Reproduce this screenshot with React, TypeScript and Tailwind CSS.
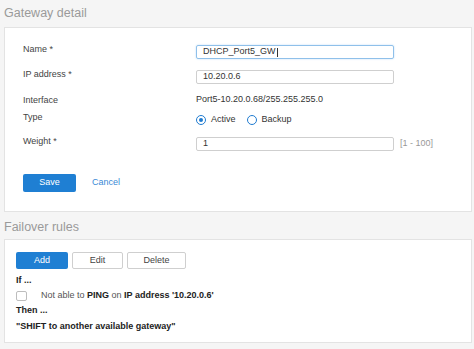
import React from "react";

const font = { fontFamily: '"Liberation Sans", Arial, sans-serif' };

function Label({ children }: { children: React.ReactNode }) {
  return <div className="w-[173px] shrink-0 text-[9px] leading-[9px] text-[#444]">{children}</div>;
}

export default function App() {
  return (
    <div className="w-[474px] h-[349px] overflow-hidden bg-[#f5f5f5] flex flex-col" style={font}>
      <div className="h-[27px] shrink-0 flex items-center pl-[4px] text-[12.5px] text-[#9a9a9a]">Gateway detail</div>
      <div className="ml-[4px] mr-[2px] h-[185px] shrink-0 bg-white border border-[#e3e3e3] pl-[18px] pt-[17px] flex flex-col">
        <div className="flex items-start h-[14px]">
          <Label>Name *</Label>
          <div className="w-[198px] h-[14px] border border-[#8fc0ea] rounded-[2px] shadow-[0_0_2px_#b9daf5] flex items-center pl-[6px] text-[9px] text-[#333]">
            DHCP_Port5_GW<span className="w-px h-[9px] bg-[#333] ml-px" />
          </div>
        </div>
        <div className="flex items-start h-[14px] mt-[11px]">
          <Label>IP address *</Label>
          <div className="w-[198px] h-[14px] border border-[#cfcfcf] rounded-[2px] flex items-center pl-[6px] text-[9px] text-[#333]">10.20.0.6</div>
        </div>
        <div className="flex items-center h-[14px] mt-[9px]">
          <Label>Interface</Label>
          <div className="text-[9px] text-[#333]">Port5-10.20.0.68/255.255.255.0</div>
        </div>
        <div className="flex items-start h-[14px] mt-[6px]">
          <Label>Type</Label>
          <div className="flex items-center h-[14px] text-[9px] text-[#333]">
            <span className="w-[10px] h-[10px] rounded-full border-[1.5px] border-[#1f7bd0] flex items-center justify-center">
              <span className="w-[4px] h-[4px] rounded-full bg-[#1f7bd0]" />
            </span>
            <span className="ml-[5px]">Active</span>
            <span className="ml-[11px] w-[10px] h-[10px] rounded-full border-[1.5px] border-[#1f7bd0]" />
            <span className="ml-[5px]">Backup</span>
          </div>
        </div>
        <div className="flex items-start h-[14px] mt-[10px]">
          <Label>Weight *</Label>
          <div className="w-[198px] h-[14px] border border-[#cfcfcf] rounded-[2px] flex items-center pl-[6px] text-[9px] text-[#333]">1</div>
          <div className="ml-[6px] h-[14px] flex items-center text-[9px] text-[#999]">[1 - 100]</div>
        </div>
        <div className="flex items-center mt-[23px]">
          <div className="w-[53px] h-[18px] bg-[#1f7fd3] rounded-[2px] text-white text-[9px] flex items-center justify-center">Save</div>
          <div className="ml-[16px] text-[9px] text-[#3a89d6]">Cancel</div>
        </div>
      </div>
      <div className="h-[27px] shrink-0 flex items-center pl-[4px] pt-[3px] text-[12.5px] text-[#9a9a9a]">Failover rules</div>
      <div className="ml-[4px] mr-[2px] h-[104px] shrink-0 bg-white border border-[#e3e3e3] pl-[11px] pt-[12px] flex flex-col text-[9px] text-[#333]">
        <div className="flex gap-[4px]">
          <div className="w-[52px] h-[17px] bg-[#1f7fd3] rounded-[2px] text-white flex items-center justify-center">Add</div>
          <div className="w-[51px] h-[17px] border border-[#cfcfcf] rounded-[2px] bg-white flex items-center justify-center text-[#444]">Edit</div>
          <div className="w-[59px] h-[17px] border border-[#cfcfcf] rounded-[2px] bg-white flex items-center justify-center text-[#444]">Delete</div>
        </div>
        <div className="mt-[7px] h-[10px] flex items-center font-bold text-[#222]">If ...</div>
        <div className="mt-[4px] h-[11px] flex items-center">
          <span className="w-[11px] h-[10px] border border-[#bdbdbd] rounded-[2px] bg-white" />
          <span className="ml-[14px] text-[#555]">
            Not able to <b className="text-[#222]">PING</b> on <b className="text-[#222]">IP address '10.20.0.6'</b>
          </span>
        </div>
        <div className="mt-[5px] h-[10px] flex items-center font-bold text-[#222]">Then ...</div>
        <div className="mt-[6px] h-[10px] flex items-center font-bold text-[#222]">"SHIFT to another available gateway"</div>
      </div>
    </div>
  );
}
